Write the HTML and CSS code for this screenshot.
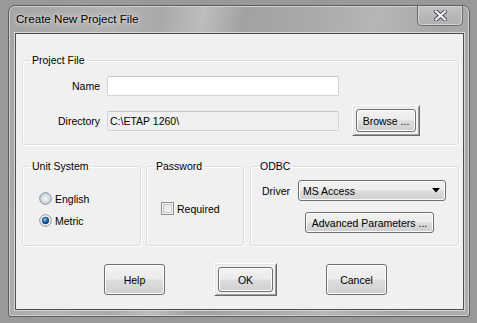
FILE: index.html
```html
<!DOCTYPE html>
<html lang="en">
<head>
    <meta charset="UTF-8">
    <title>Create New Project File</title>
    <link rel="stylesheet" href="styles.css">
</head>
<body>
    <div class="window">
        <div class="titlebar">
            <span class="title">Create New Project File</span>
            <span class="close">
                <svg width="13" height="11" viewBox="0 0 13 11">
                    <path d="M2 1.5 L11 9.5 M11 1.5 L2 9.5" stroke="#4a4d5a" stroke-width="4.2" stroke-linecap="square"/>
                    <path d="M2 1.5 L11 9.5 M11 1.5 L2 9.5" stroke="#f4f4f6" stroke-width="2.2" stroke-linecap="square"/>
                </svg>
            </span>
        </div>

        <div class="client">
            <fieldset class="group project">
                <legend>Project File</legend>
                <div class="project-body">
                    <div class="row">
                        <label class="field-label">Name</label>
                        <input class="textbox" type="text">
                    </div>
                    <div class="row">
                        <label class="field-label">Directory</label>
                        <input class="textbox readonly" type="text" value="C:\ETAP 1260\" readonly>
                        <span class="default-frame browse-frame"><button class="btn">Browse ...</button></span>
                    </div>
                </div>
            </fieldset>

            <div class="group-row">
                <fieldset class="group unit">
                    <legend>Unit System</legend>
                    <div class="unit-body">
                        <label class="option">
                            <svg class="radio" width="13" height="13" viewBox="0 0 13 13">
                                <defs>
                                    <radialGradient id="rOff" cx="0.5" cy="0.5" r="0.5">
                                        <stop offset="0" stop-color="#f5f8fb"/>
                                        <stop offset="1" stop-color="#c2cdd8"/>
                                    </radialGradient>
                                </defs>
                                <circle cx="6.5" cy="6.5" r="5.8" fill="url(#rOff)" stroke="#8c9094"/>
                            </svg>
                            <span>English</span>
                        </label>
                        <label class="option">
                            <svg class="radio" width="13" height="13" viewBox="0 0 13 13">
                                <defs>
                                    <radialGradient id="rOn" cx="0.4" cy="0.35" r="0.6">
                                        <stop offset="0" stop-color="#8fd0f7"/>
                                        <stop offset="0.6" stop-color="#1f6fb8"/>
                                        <stop offset="1" stop-color="#0d3a70"/>
                                    </radialGradient>
                                </defs>
                                <circle cx="6.5" cy="6.5" r="5.8" fill="#f2f3f4" stroke="#8c9094"/>
                                <circle cx="6.5" cy="6.5" r="3.4" fill="url(#rOn)" stroke="#1b3c62" stroke-width="0.6"/>
                            </svg>
                            <span>Metric</span>
                        </label>
                    </div>
                </fieldset>

                <fieldset class="group password">
                    <legend>Password</legend>
                    <div class="password-body">
                        <label class="option">
                            <span class="checkbox"></span>
                            <span>Required</span>
                        </label>
                    </div>
                </fieldset>

                <fieldset class="group odbc">
                    <legend>ODBC</legend>
                    <div class="odbc-body">
                        <div class="driver-row">
                            <label class="driver-label">Driver</label>
                            <div class="select">
                                <span>MS Access</span>
                                <svg width="8" height="5" viewBox="0 0 8 5"><path d="M0 0 H8 L4 4.5 Z" fill="#000"/></svg>
                            </div>
                        </div>
                        <button class="btn advanced">Advanced Parameters ...</button>
                    </div>
                </fieldset>
            </div>

            <div class="button-row">
                <button class="btn dialog-btn">Help</button>
                <span class="default-frame ok-frame"><button class="btn">OK</button></span>
                <button class="btn dialog-btn">Cancel</button>
            </div>
        </div>
    </div>
</body>
</html>
```

FILE: styles.css
```css
* {
    margin: 0;
    padding: 0;
    box-sizing: border-box;
    font-family: 'Liberation Sans', Arial, sans-serif;
}

body {
    background-color: #999999;
    width: 477px;
    height: 323px;
    overflow: hidden;
}

.window {
    margin: 5px 0 0 8px;
    width: 462px;
    height: 312px;
    border: 1px solid #5e5e5e;
    border-radius: 7px 7px 3px 3px;
    background: linear-gradient(100deg, #a4a4a4 0%, #b3b3b3 20%, #a9a9a9 30%, #bdbdbd 38%, #a2a2a2 46%, #aaaaaa 60%, #b6b6b6 72%, #a6a6a6 85%, #adadad 100%);
    box-shadow: inset 0 0 0 1px #d0d0d0;
}

/* title bar */
.titlebar {
    display: flex;
    height: 27px;
    padding-left: 7px;
}

.title {
    margin-top: 6px;
    font-size: 11.6px;
    line-height: 14px;
    color: #000;
    text-shadow: 0 0 6px #e8e8e8, 0 0 3px #e0e0e0;
}

.close {
    margin-left: auto;
    margin-right: 6px;
    width: 46px;
    height: 20px;
    border: 1px solid #6c6c6c;
    border-top: none;
    border-radius: 0 0 5px 5px;
    background: linear-gradient(#c2c2c2, #b0b0b0);
    box-shadow: inset 0 0 0 1px #d4d4d4;
    display: flex;
    align-items: center;
    justify-content: center;
    padding-bottom: 1px;
}

/* client area */
.client {
    margin: 0 5px 0 6px;
    height: 277px;
    background-color: #f0f0f0;
    border: 1px solid #4e4e4e;
    box-shadow: 0 0 0 1px #d6d6d6;
    padding: 20px 0 0 6px;
}

.group {
    border: 1px solid #d5dfe5;
    border-radius: 3px;
    box-shadow: inset 1px 1px 0 #fff, 1px 1px 0 #fff;
    padding: 0;
}

.group legend {
    margin-left: 7px;
    padding: 0 2px;
    font-size: 10.5px;
    line-height: 12px;
    color: #000;
}

.project {
    width: 437px;
}

.project-body {
    padding: 10px 0 8px 0;
}

.row {
    display: flex;
    align-items: center;
}

.row + .row {
    margin-top: 9px;
}

.field-label {
    width: 77px;
    text-align: right;
    font-size: 10.5px;
    color: #000;
}

.textbox {
    appearance: none;
    margin-left: 7px;
    width: 232px;
    height: 20px;
    border: 1px solid #d2d5d9;
    border-top-color: #c3c6cb;
    border-radius: 2px;
    background-color: #fff;
    font-size: 10.5px;
    padding: 0 2px;
    color: #000;
    outline: none;
}

.textbox.readonly {
    background-color: #f0f0f0;
}

/* framed (default) buttons */
.default-frame {
    display: inline-flex;
    align-items: center;
    justify-content: center;
    border: 1px solid;
    border-color: #ffffff #6a6a6a #6a6a6a #ffffff;
    box-shadow: inset 1px 1px 0 #e4e4e4, inset -1px -1px 0 #a0a0a0;
}

.browse-frame {
    margin-left: 13px;
    width: 68px;
    height: 31px;
}

.browse-frame .btn {
    width: 60px;
    height: 23px;
}

.btn {
    appearance: none;
    border: 1px solid #707070;
    border-radius: 3px;
    background: linear-gradient(#f2f2f2 0%, #ebebeb 48%, #dddddd 52%, #cfcfcf 100%);
    box-shadow: inset 0 0 0 1px #fcfcfc;
    font-size: 10.5px;
    color: #000;
}

/* lower groups */
.group-row {
    display: flex;
    margin-top: 15px;
}

.unit {
    width: 119px;
}

.password {
    width: 98px;
    margin-left: 5px;
}

.odbc {
    width: 209px;
    margin-left: 6px;
}

.unit-body {
    height: 73px;
    padding: 20px 0 0 16px;
}

.option {
    display: flex;
    align-items: center;
    gap: 3px;
    height: 13px;
    font-size: 10.5px;
    color: #000;
}

.option + .option {
    margin-top: 9px;
}

.radio {
    display: block;
}

.password-body {
    height: 73px;
    padding: 30px 0 0 14px;
}

.checkbox {
    width: 13px;
    height: 13px;
    border: 1px solid #8e8f8f;
    background: linear-gradient(135deg, #dcdcdc, #fbfbfb);
    box-shadow: inset 0 0 0 1px #f4f4f4, inset 0 0 0 2px #c8c8c8;
}

.odbc-body {
    height: 73px;
    padding: 8px 0 0 11px;
}

.driver-row {
    display: flex;
    align-items: center;
}

.driver-label {
    font-size: 10.5px;
    color: #000;
}

.select {
    margin-left: 8px;
    width: 148px;
    height: 21px;
    border: 1px solid #707070;
    border-radius: 3px;
    background: linear-gradient(#f2f2f2 0%, #ebebeb 48%, #dddddd 52%, #cfcfcf 100%);
    box-shadow: inset 0 0 0 1px #fcfcfc;
    display: flex;
    align-items: center;
    justify-content: space-between;
    padding: 0 5px 0 4px;
    font-size: 10.5px;
    color: #000;
}

.advanced {
    margin: 11px 0 0 43px;
    width: 129px;
    height: 21px;
}

/* dialog buttons */
.button-row {
    display: flex;
    align-items: center;
    gap: 49px;
    margin: 17px 0 0 82px;
}

.dialog-btn {
    width: 61px;
    height: 31px;
}

.ok-frame {
    width: 63px;
    height: 33px;
}

.ok-frame .btn {
    width: 55px;
    height: 25px;
}
```
